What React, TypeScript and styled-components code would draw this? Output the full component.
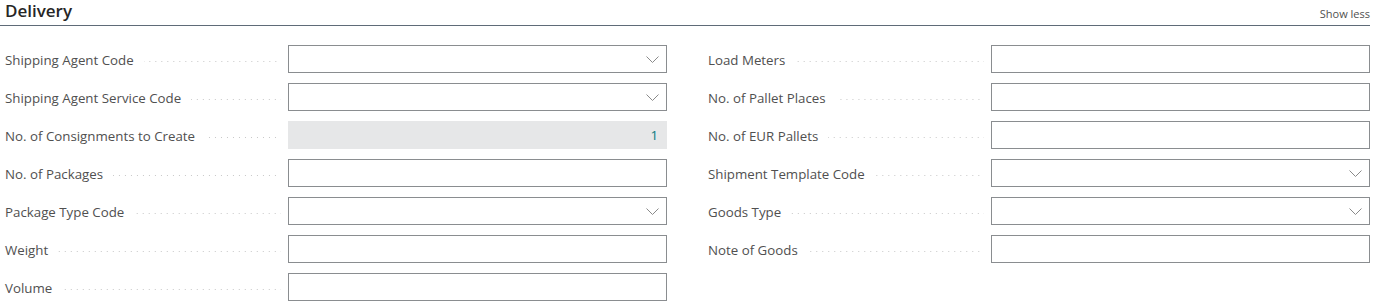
import React from 'react';
import styled, {createGlobalStyle} from "styled-components";

const GlobalStyle = createGlobalStyle`
  body {
    margin: 0;
    background: #ffffff;
    font-family: "Segoe UI", "Open Sans", sans-serif;
    color: #212121;
  }
`

type Field = {
    label: string
    kind?: 'select' | 'text' | 'readonly'
    value?: string
}

const leftFields: Field[] = [
    {label: 'Shipping Agent Code', kind: 'select'},
    {label: 'Shipping Agent Service Code', kind: 'select'},
    {label: 'No. of Consignments to Create', kind: 'readonly', value: '1'},
    {label: 'No. of Packages'},
    {label: 'Package Type Code', kind: 'select'},
    {label: 'Weight'},
    {label: 'Volume'},
]

const rightFields: Field[] = [
    {label: 'Load Meters'},
    {label: 'No. of Pallet Places'},
    {label: 'No. of EUR Pallets'},
    {label: 'Shipment Template Code', kind: 'select'},
    {label: 'Goods Type', kind: 'select'},
    {label: 'Note of Goods'},
]

const Chevron = () => (
    <svg width="13" height="7" viewBox="0 0 13 7" fill="none">
        <path d="M0.5 0.5 L6.5 6.5 L12.5 0.5" stroke="#8a8a8a" strokeWidth="1"/>
    </svg>
)

const FieldRow = ({field}: { field: Field }) => {
    const kind = field.kind ?? 'text'
    return (
        <Row>
            <Label>
                <LabelText>{field.label}</LabelText>
                <Dots/>
            </Label>
            <Input $readonly={kind === 'readonly'}>
                <Value>{field.value}</Value>
                {kind === 'select' && <Chevron/>}
            </Input>
        </Row>
    )
}

export default function App() {
    return (
        <>
            <GlobalStyle/>
            <Section>
                <Header>
                    <Title>Delivery</Title>
                    <ShowLess>Show less</ShowLess>
                </Header>
                <Columns>
                    <Column>
                        {leftFields.map(f => <FieldRow key={f.label} field={f}/>)}
                    </Column>
                    <Column>
                        {rightFields.map(f => <FieldRow key={f.label} field={f}/>)}
                    </Column>
                </Columns>
            </Section>
        </>
    );
}

const Section = styled.section`
  width: 1370px;
`
const Header = styled.div`
  display: flex;
  justify-content: space-between;
  align-items: flex-end;
  height: 25px;
  padding-left: 5px;
  border-bottom: 1px solid #5f6b78;
`
const Title = styled.h2`
  margin: 0;
  font-size: 17px;
  font-weight: 600;
  line-height: 22px;
  color: #262626;
  padding-bottom: 3px;
`
const ShowLess = styled.span`
  font-size: 11px;
  color: #505050;
  line-height: 14px;
  padding-bottom: 4px;
`
const Columns = styled.div`
  display: grid;
  grid-template-columns: 662px 662px;
  column-gap: 41px;
  padding: 19px 0 0 5px;
`
const Column = styled.div`
  display: flex;
  flex-direction: column;
  gap: 10px;
`
const Row = styled.div`
  display: flex;
  align-items: center;
  height: 28px;
`
const Label = styled.div`
  width: 283px;
  flex-shrink: 0;
  display: flex;
  align-items: center;
  padding-right: 7px;
  padding-top: 1px;
  box-sizing: border-box;
  font-size: 13.3px;
  color: #505050;
`
const LabelText = styled.span`
  white-space: nowrap;
  padding-right: 10px;
`
const Dots = styled.span`
  flex: 1;
  height: 1px;
  margin-top: 3px;
  background-image: linear-gradient(to right, #c8c8c8 1px, transparent 1px);
  background-size: 6px 1px;
  background-repeat: repeat-x;
  background-position: right;
`
const Input = styled.div<{ $readonly?: boolean }>`
  flex: 1;
  height: 28px;
  box-sizing: border-box;
  display: flex;
  align-items: center;
  justify-content: flex-end;
  gap: 8px;
  padding: 0 7px 0 8px;
  border: 1px solid ${p => p.$readonly ? '#e6e7e8' : '#8a8d90'};
  background: ${p => p.$readonly ? '#e6e7e8' : '#ffffff'};
`
const Value = styled.span`
  font-size: 13.3px;
  color: #0b7a80;
  padding-right: 1px;
`
